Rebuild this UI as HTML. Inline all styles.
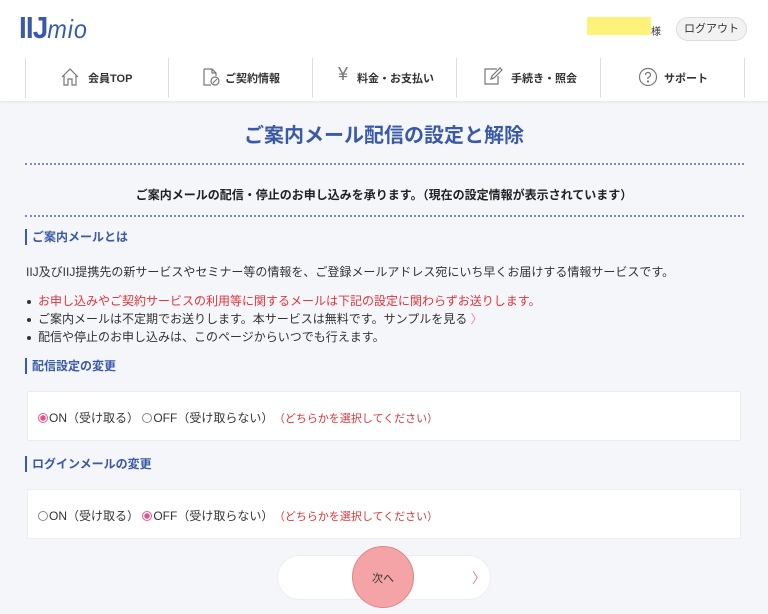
<!DOCTYPE html><html><head><meta charset="utf-8"><style>
*{margin:0;padding:0;box-sizing:border-box}
body{width:768px;height:614px;overflow:hidden;background:#f5f6fa;font-family:"Liberation Sans","Noto Sans CJK JP",sans-serif;color:#333;position:relative}
.a{position:absolute}
.top{left:0;top:0;width:768px;height:101px;background:#fff;box-shadow:0 1px 3px rgba(0,0,0,.08)}
.sep{width:1px;height:40px;top:58px;background:#ddd}
.nav{top:70px;font-size:11px;font-weight:bold;color:#333;white-space:nowrap}
.dot{left:25px;width:719px;border-top:2px dotted #7a8cc4}
.h{left:25px;border-left:2px solid #3a5aa8;padding-left:5px;font-size:12px;font-weight:bold;color:#3a5aa8;line-height:16px}
.box{left:27px;width:714px;height:50px;background:#fff;border:1px solid #eceef2}
.r{font-size:12px;top:17px;white-space:nowrap}
.rad{display:inline-block;width:10px;height:10px;border-radius:50%;border:1px solid #888;vertical-align:-1px;margin-right:1px}
.on{border-color:#e85a9a;background:radial-gradient(#e8508e 2.5px,#fff 3px)}
.red{color:#e0343a}
li{list-style:none;font-size:12px;line-height:18px;position:relative;padding-left:12px}
li:before{content:"";position:absolute;left:1px;top:8px;width:4px;height:4px;border-radius:50%;background:#333}
</style></head><body>
<div class="a top"></div>
<div class="a" style="left:19px;top:10px;font-size:31px;font-weight:bold;color:#3a5aa8;letter-spacing:-1px;transform:scaleX(.9);transform-origin:left">IIJ<span style="font-style:italic;font-weight:normal;font-size:26px;letter-spacing:1px">mio</span></div>
<div class="a" style="left:587px;top:17px;width:64px;height:18px;background:#fdf27a"></div>
<div class="a" style="left:651px;top:23px;font-size:10px">様</div>
<div class="a" style="left:676px;top:17px;width:71px;height:24px;border-radius:12px;background:#f2f2f2;border:1px solid #ddd;font-size:11px;text-align:center;line-height:22px">ログアウト</div>
<div class="a sep" style="left:25px"></div><div class="a sep" style="left:168px"></div><div class="a sep" style="left:312px"></div><div class="a sep" style="left:456px"></div><div class="a sep" style="left:600px"></div><div class="a sep" style="left:744px"></div>
<svg class="a" style="left:60px;top:67px" width="20" height="20" viewBox="0 0 20 20" fill="none" stroke="#777" stroke-width="1.2"><path d="M2 10L10 2 18 10M4 8V18H8V12H12V18H16V8"/></svg>
<div class="a nav" style="left:88px">会員TOP</div>
<svg class="a" style="left:201px;top:67px" width="20" height="20" viewBox="0 0 20 20" fill="none" stroke="#777" stroke-width="1.2"><path d="M3 2H11L15 6V9M3 2V18H10M11 2V6H15"/><circle cx="14" cy="14" r="4"/><path d="M12 16L16 12"/></svg>
<div class="a nav" style="left:225px">ご契約情報</div>
<div class="a" style="left:338px;top:64px;font-size:18px;color:#777">¥</div>
<div class="a nav" style="left:357px">料金・お支払い</div>
<svg class="a" style="left:483px;top:66px" width="20" height="20" viewBox="0 0 20 20" fill="none" stroke="#777" stroke-width="1.2"><path d="M14 3H2V18H15V10M8 13L9 10 17 2 19 4 11 12Z"/></svg>
<div class="a nav" style="left:511px">手続き・照会</div>
<svg class="a" style="left:638px;top:67px" width="20" height="20" viewBox="0 0 20 20" fill="none" stroke="#777" stroke-width="1.2"><circle cx="10" cy="10" r="8.5"/><path d="M7.5 8Q7.5 5.5 10 5.5T12.5 8Q12.5 9.5 10 10.5V12"/><circle cx="10" cy="14.5" r=".5"/></svg>
<div class="a nav" style="left:664px">サポート</div>

<div class="a" style="left:0;width:768px;top:119px;text-align:center;font-size:20px;font-weight:bold;color:#3a5aa8">ご案内メール配信の設定と解除</div>
<div class="a dot" style="top:163px"></div>
<div class="a" style="left:0;width:768px;top:186px;text-align:center;font-size:12px;font-weight:bold;color:#222">ご案内メールの配信・停止のお申し込みを承ります。（現在の設定情報が表示されています）</div>
<div class="a dot" style="top:215px"></div>
<div class="a h" style="top:229px">ご案内メールとは</div>
<div class="a" style="left:26px;top:263px;font-size:12px">IIJ及びIIJ提携先の新サービスやセミナー等の情報を、ご登録メールアドレス宛にいち早くお届けする情報サービスです。</div>
<ul class="a" style="left:26px;top:292px">
<li class="red">お申し込みやご契約サービスの利用等に関するメールは下記の設定に関わらずお送りします。</li>
<li>ご案内メールは不定期でお送りします。本サービスは無料です。サンプルを見る <span style="color:#e87aa8">〉</span></li>
<li>配信や停止のお申し込みは、このページからいつでも行えます。</li></ul>
<div class="a h" style="top:358px">配信設定の変更</div>
<div class="a box" style="top:391px"><div class="a r" style="left:10px"><span class="rad on"></span>ON（受け取る） <span class="rad"></span>OFF（受け取らない）　<span class="red" style="font-size:11px">（どちらかを選択してください）</span></div></div>
<div class="a h" style="top:456px">ログインメールの変更</div>
<div class="a box" style="top:489px"><div class="a r" style="left:10px"><span class="rad"></span>ON（受け取る） <span class="rad on"></span>OFF（受け取らない）　<span class="red" style="font-size:11px">（どちらかを選択してください）</span></div></div>
<div class="a" style="left:277px;top:555px;width:214px;height:45px;border-radius:23px;background:#fff;border:1px solid #eee"></div>
<div class="a" style="left:352px;top:546px;width:62px;height:62px;border-radius:50%;background:#f4a3a6;border:1px solid #e08488"></div>
<div class="a" style="left:352px;top:570px;width:62px;text-align:center;font-size:11px">次へ</div>
<div class="a" style="left:472px;top:568px;font-size:14px;color:#e87aa8">〉</div>
</body></html>
